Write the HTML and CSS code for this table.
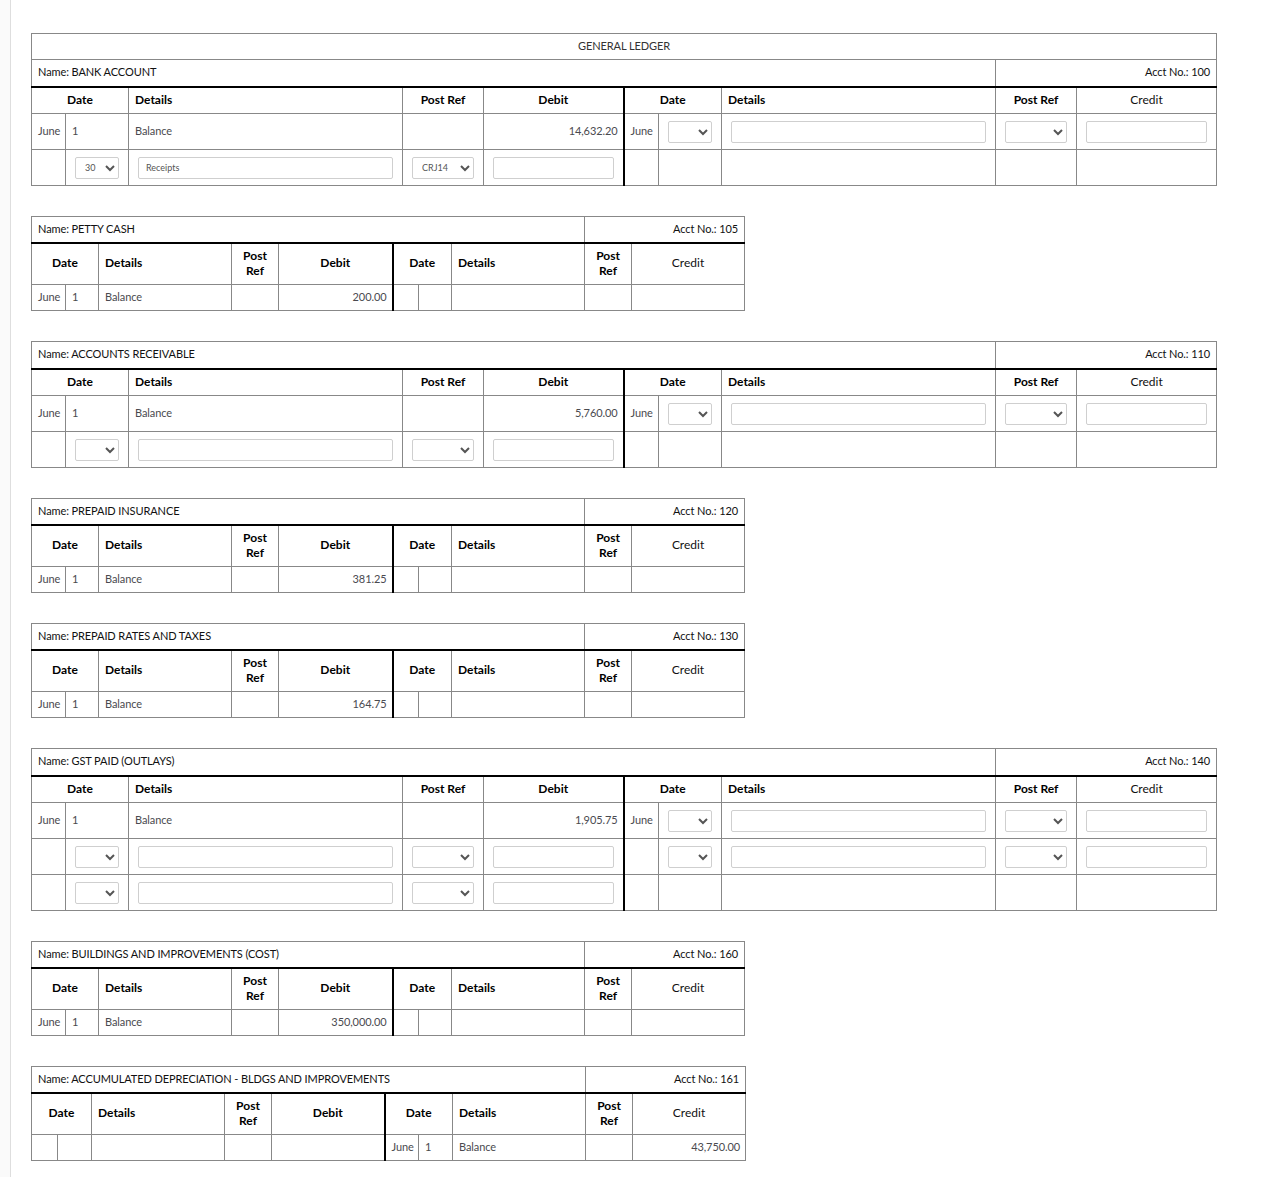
FILE: index.html
```html
<!DOCTYPE html>
<html lang="en">
<head>
<meta charset="utf-8">
<title>General Ledger</title>
<link rel="stylesheet" href="styles.css">
</head>
<body>
<div class="page">
  <aside class="rail"></aside>
  <main class="content">

    <!-- BANK ACCOUNT -->
    <table class="ledger wide">
      <colgroup><col><col><col><col><col><col><col><col><col><col></colgroup>
      <tr class="title"><td colspan="10">GENERAL LEDGER</td></tr>
      <tr class="name"><td colspan="8">Name: BANK ACCOUNT</td><td colspan="2" class="acct">Acct No.: 100</td></tr>
      <tr class="head"><th colspan="2">Date</th><th class="l">Details</th><th>Post Ref</th><th class="split">Debit</th><th colspan="2">Date</th><th class="l">Details</th><th>Post Ref</th><th class="reg">Credit</th></tr>
      <tr class="irow">
        <td>June</td><td>1</td><td>Balance</td><td></td><td class="num split">14,632.20</td>
        <td>June</td>
        <td class="in"><select class="sel"><option></option></select></td>
        <td class="in"><input class="txt" type="text"></td>
        <td class="in"><select class="sel"><option></option></select></td>
        <td class="in"><input class="txt" type="text"></td>
      </tr>
      <tr class="irow">
        <td></td>
        <td class="in"><select class="sel"><option>30</option></select></td>
        <td class="in"><input class="txt" type="text" value="Receipts"></td>
        <td class="in"><select class="sel"><option>CRJ14</option></select></td>
        <td class="in split"><input class="txt" type="text"></td>
        <td></td><td></td><td></td><td></td><td></td>
      </tr>
    </table>

    <!-- PETTY CASH -->
    <table class="ledger narrow">
      <colgroup><col><col><col><col><col><col><col><col><col><col></colgroup>
      <tr class="name"><td colspan="8">Name: PETTY CASH</td><td colspan="2" class="acct">Acct No.: 105</td></tr>
      <tr class="head"><th colspan="2">Date</th><th class="l">Details</th><th>Post Ref</th><th class="split">Debit</th><th colspan="2">Date</th><th class="l">Details</th><th>Post Ref</th><th class="reg">Credit</th></tr>
      <tr class="drow"><td>June</td><td>1</td><td>Balance</td><td></td><td class="num split">200.00</td><td></td><td></td><td></td><td></td><td></td></tr>
    </table>

    <!-- ACCOUNTS RECEIVABLE -->
    <table class="ledger wide">
      <colgroup><col><col><col><col><col><col><col><col><col><col></colgroup>
      <tr class="name"><td colspan="8">Name: ACCOUNTS RECEIVABLE</td><td colspan="2" class="acct">Acct No.: 110</td></tr>
      <tr class="head"><th colspan="2">Date</th><th class="l">Details</th><th>Post Ref</th><th class="split">Debit</th><th colspan="2">Date</th><th class="l">Details</th><th>Post Ref</th><th class="reg">Credit</th></tr>
      <tr class="irow">
        <td>June</td><td>1</td><td>Balance</td><td></td><td class="num split">5,760.00</td>
        <td>June</td>
        <td class="in"><select class="sel"><option></option></select></td>
        <td class="in"><input class="txt" type="text"></td>
        <td class="in"><select class="sel"><option></option></select></td>
        <td class="in"><input class="txt" type="text"></td>
      </tr>
      <tr class="irow">
        <td></td>
        <td class="in"><select class="sel"><option></option></select></td>
        <td class="in"><input class="txt" type="text"></td>
        <td class="in"><select class="sel"><option></option></select></td>
        <td class="in split"><input class="txt" type="text"></td>
        <td></td><td></td><td></td><td></td><td></td>
      </tr>
    </table>

    <!-- PREPAID INSURANCE -->
    <table class="ledger narrow">
      <colgroup><col><col><col><col><col><col><col><col><col><col></colgroup>
      <tr class="name"><td colspan="8">Name: PREPAID INSURANCE</td><td colspan="2" class="acct">Acct No.: 120</td></tr>
      <tr class="head"><th colspan="2">Date</th><th class="l">Details</th><th>Post Ref</th><th class="split">Debit</th><th colspan="2">Date</th><th class="l">Details</th><th>Post Ref</th><th class="reg">Credit</th></tr>
      <tr class="drow"><td>June</td><td>1</td><td>Balance</td><td></td><td class="num split">381.25</td><td></td><td></td><td></td><td></td><td></td></tr>
    </table>

    <!-- PREPAID RATES AND TAXES -->
    <table class="ledger narrow">
      <colgroup><col><col><col><col><col><col><col><col><col><col></colgroup>
      <tr class="name"><td colspan="8">Name: PREPAID RATES AND TAXES</td><td colspan="2" class="acct">Acct No.: 130</td></tr>
      <tr class="head"><th colspan="2">Date</th><th class="l">Details</th><th>Post Ref</th><th class="split">Debit</th><th colspan="2">Date</th><th class="l">Details</th><th>Post Ref</th><th class="reg">Credit</th></tr>
      <tr class="drow"><td>June</td><td>1</td><td>Balance</td><td></td><td class="num split">164.75</td><td></td><td></td><td></td><td></td><td></td></tr>
    </table>

    <!-- GST PAID -->
    <table class="ledger wide">
      <colgroup><col><col><col><col><col><col><col><col><col><col></colgroup>
      <tr class="name"><td colspan="8">Name: GST PAID (OUTLAYS)</td><td colspan="2" class="acct">Acct No.: 140</td></tr>
      <tr class="head"><th colspan="2">Date</th><th class="l">Details</th><th>Post Ref</th><th class="split">Debit</th><th colspan="2">Date</th><th class="l">Details</th><th>Post Ref</th><th class="reg">Credit</th></tr>
      <tr class="irow">
        <td>June</td><td>1</td><td>Balance</td><td></td><td class="num split">1,905.75</td>
        <td>June</td>
        <td class="in"><select class="sel"><option></option></select></td>
        <td class="in"><input class="txt" type="text"></td>
        <td class="in"><select class="sel"><option></option></select></td>
        <td class="in"><input class="txt" type="text"></td>
      </tr>
      <tr class="irow">
        <td></td>
        <td class="in"><select class="sel"><option></option></select></td>
        <td class="in"><input class="txt" type="text"></td>
        <td class="in"><select class="sel"><option></option></select></td>
        <td class="in split"><input class="txt" type="text"></td>
        <td></td>
        <td class="in"><select class="sel"><option></option></select></td>
        <td class="in"><input class="txt" type="text"></td>
        <td class="in"><select class="sel"><option></option></select></td>
        <td class="in"><input class="txt" type="text"></td>
      </tr>
      <tr class="irow">
        <td></td>
        <td class="in"><select class="sel"><option></option></select></td>
        <td class="in"><input class="txt" type="text"></td>
        <td class="in"><select class="sel"><option></option></select></td>
        <td class="in split"><input class="txt" type="text"></td>
        <td></td><td></td><td></td><td></td><td></td>
      </tr>
    </table>

    <!-- BUILDINGS AND IMPROVEMENTS -->
    <table class="ledger narrow">
      <colgroup><col><col><col><col><col><col><col><col><col><col></colgroup>
      <tr class="name"><td colspan="8">Name: BUILDINGS AND IMPROVEMENTS (COST)</td><td colspan="2" class="acct">Acct No.: 160</td></tr>
      <tr class="head"><th colspan="2">Date</th><th class="l">Details</th><th>Post Ref</th><th class="split">Debit</th><th colspan="2">Date</th><th class="l">Details</th><th>Post Ref</th><th class="reg">Credit</th></tr>
      <tr class="drow"><td>June</td><td>1</td><td>Balance</td><td></td><td class="num split">350,000.00</td><td></td><td></td><td></td><td></td><td></td></tr>
    </table>

    <!-- ACCUMULATED DEPRECIATION -->
    <table class="ledger narrow alt">
      <colgroup><col><col><col><col><col><col><col><col><col><col></colgroup>
      <tr class="name"><td colspan="8">Name: ACCUMULATED DEPRECIATION - BLDGS AND IMPROVEMENTS</td><td colspan="2" class="acct">Acct No.: 161</td></tr>
      <tr class="head"><th colspan="2">Date</th><th class="l">Details</th><th>Post Ref</th><th class="split">Debit</th><th colspan="2">Date</th><th class="l">Details</th><th>Post Ref</th><th class="reg">Credit</th></tr>
      <tr class="drow"><td></td><td></td><td></td><td></td><td class="split"></td><td>June</td><td>1</td><td>Balance</td><td></td><td class="num">43,750.00</td></tr>
    </table>

  </main>
</div>
</body>
</html>
```

FILE: styles.css
```css
* { box-sizing: border-box; }
html, body { margin: 0; padding: 0; background: #fff; }
body {
  font-family: Lato, "Open Sans", "Liberation Sans", sans-serif;
  font-size: 11px;
  color: #000;
}
.page { display: flex; min-height: 100vh; }
.rail {
  flex: none;
  width: 11px;
  background: #fafafa;
  border-right: 1px solid #dedede;
}
.content { padding: 33px 0 0 20px; }

.ledger {
  border-collapse: collapse;
  table-layout: fixed;
  margin-bottom: 30px;
}
.ledger td, .ledger th {
  border: 1px solid #888;
  padding: 0 6px 2px;
  vertical-align: middle;
  text-align: left;
  font-size: 11px;
  font-weight: 400;
  letter-spacing: -0.1px;
  color: #4a4a4f;
  overflow: hidden;
}

/* column widths */
.wide { width: 1185px; }
.wide col:nth-child(1) { width: 34px; }
.wide col:nth-child(2) { width: 63px; }
.wide col:nth-child(3) { width: 274px; }
.wide col:nth-child(4) { width: 81px; }
.wide col:nth-child(5) { width: 140px; }
.wide col:nth-child(6) { width: 35px; }
.wide col:nth-child(7) { width: 63px; }
.wide col:nth-child(8) { width: 274px; }
.wide col:nth-child(9) { width: 81px; }
.wide col:nth-child(10) { width: 140px; }

.narrow { width: 713px; }
.narrow col:nth-child(1) { width: 34px; }
.narrow col:nth-child(2) { width: 33px; }
.narrow col:nth-child(3) { width: 133px; }
.narrow col:nth-child(4) { width: 47px; }
.narrow col:nth-child(5) { width: 114px; }
.narrow col:nth-child(6) { width: 26px; }
.narrow col:nth-child(7) { width: 33px; }
.narrow col:nth-child(8) { width: 133px; }
.narrow col:nth-child(9) { width: 47px; }
.narrow col:nth-child(10) { width: 113px; }

.alt col:nth-child(1) { width: 26px; }
.alt col:nth-child(2) { width: 34px; }
.alt col:nth-child(5) { width: 113px; }
.alt col:nth-child(6) { width: 34px; }
.alt col:nth-child(7) { width: 34px; }
.alt col:nth-child(10) { width: 113px; }

/* rows */
.ledger .title td {
  height: 26px;
  text-align: center;
  color: #333;
}
.ledger .name td {
  height: 27px;
  color: #111;
}
.ledger .name .acct { text-align: right; }
.ledger .head th {
  height: 27px;
  border-top: 2px solid #000;
  font-size: 12px;
  font-weight: 700;
  letter-spacing: 0;
  color: #000;
  text-align: center;
  line-height: 15px;
}
.ledger .head th.l { text-align: left; }
.ledger .head th.reg { font-weight: 400; color: #111; }
.narrow .name td { height: 26px; }
.narrow .head th { height: 42px; }
.irow td { height: 36px; }
.drow td { height: 26px; }

.ledger .split { border-right: 2px solid #000; }
.ledger .num { text-align: right; padding-right: 5px; }
.ledger .in { padding: 0 9px; }

/* form controls */
.sel, .txt {
  display: block;
  width: 100%;
  height: 22px;
  margin: 0;
  border: 1px solid #cfcfcf;
  border-radius: 2px;
  background: #fff;
  font-family: Lato, "Open Sans", sans-serif;
  font-size: 9px;
  color: #555;
}
.sel { padding: 0 0 0 5px; }
.txt { padding: 0 7px; }
```
